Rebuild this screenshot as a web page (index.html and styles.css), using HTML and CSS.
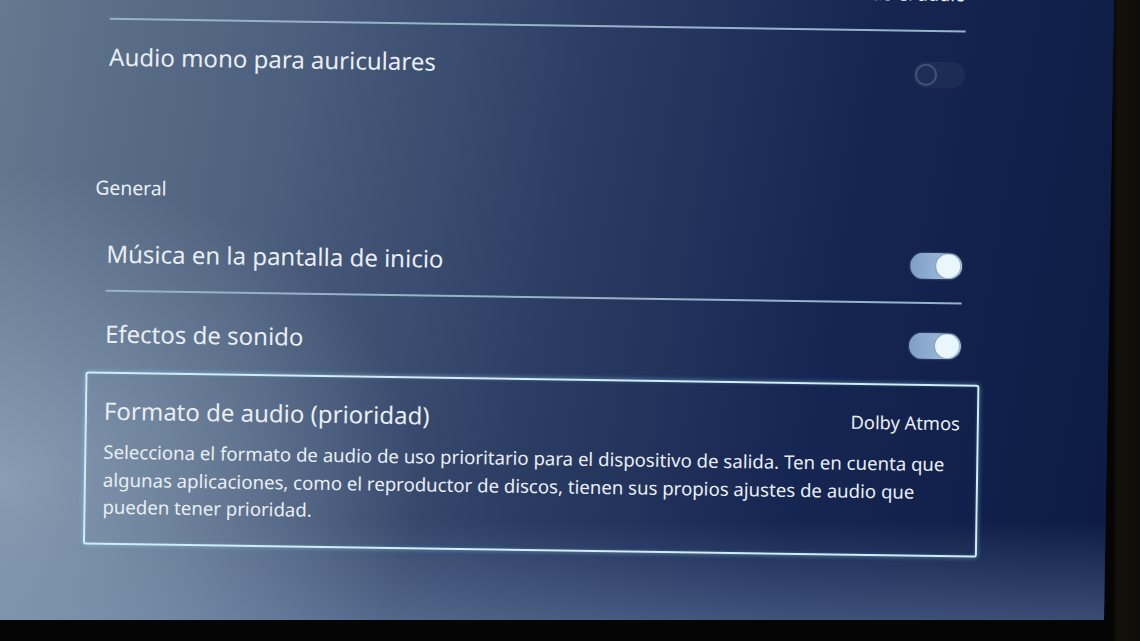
FILE: index.html
```html
<!DOCTYPE html>
<html lang="es">
<head>
    <meta charset="UTF-8">
    <meta name="viewport" content="width=device-width, initial-scale=1.0">
    <title>Ajustes - Sonido</title>
    <link rel="stylesheet" href="styles.css">
</head>
<body>
    <div class="screen">
        <div class="settings">
            <div class="row row-cut divided">
                <span class="label"></span>
                <span class="value">Todo el audio</span>
            </div>
            <div class="row row-mono">
                <span class="label">Audio mono para auriculares</span>
                <span class="toggle"></span>
            </div>

            <h2 class="group-title">General</h2>

            <div class="row row-music divided">
                <span class="label">Música en la pantalla de inicio</span>
                <span class="toggle on"></span>
            </div>
            <div class="row row-effects">
                <span class="label">Efectos de sonido</span>
                <span class="toggle on"></span>
            </div>
            <div class="row-focused">
                <div class="focused-head">
                    <span class="label">Formato de audio (prioridad)</span>
                    <span class="value">Dolby Atmos</span>
                </div>
                <p class="description">Selecciona el formato de audio de uso prioritario para el dispositivo de salida. Ten en cuenta que algunas aplicaciones, como el reproductor de discos, tienen sus propios ajustes de audio que pueden tener prioridad.</p>
            </div>
        </div>
    </div>
</body>
</html>
```

FILE: styles.css
```css
body {
    margin: 0;
    padding: 0;
    width: 1140px;
    height: 641px;
    overflow: hidden;
    background-color: #050505;
    background-image: linear-gradient(to right, transparent 1112px, #14110b 1118px, #0e0c08 100%);
    font-family: "Noto Sans", "Open Sans", sans-serif;
    color: #e8eef4;
}

.screen {
    height: 620px;
    overflow: hidden;
    clip-path: polygon(0 0, 1114px 0, 1104px 620px, 0 620px);
    background-color: #13224b;
    background-image:
        radial-gradient(ellipse 560px 420px at 0% 78%, rgba(165, 188, 208, 0.6), rgba(165, 188, 208, 0) 75%),
        linear-gradient(to top, rgba(125, 150, 185, 0.4), rgba(125, 150, 185, 0) 16%),
        linear-gradient(100deg, #64788f 0%, #4c5f7d 24%, #2c3d64 48%, #162652 70%, #0c1a42 100%);
}

.settings {
    width: 856px;
    margin: -25px 0 0 106px;
    transform: rotate(0.85deg);
    transform-origin: 424px 300px;
}

.row {
    display: flex;
    justify-content: space-between;
    align-items: center;
}

.divided {
    border-bottom: 2px solid #97b2cb;
}

.label {
    font-size: 24px;
    line-height: 30px;
}

.value {
    font-size: 18.3px;
    line-height: 26px;
}

.row-cut {
    padding-bottom: 23px;
}

.row-mono {
    padding: 18px 0 0;
}

.row-mono .toggle {
    margin-top: 12px;
}

.group-title {
    margin: 100px 0 16px -12px;
    font-size: 19.4px;
    font-weight: normal;
    line-height: 24px;
}

.row-music {
    padding: 23px 0 21px;
}

.row-effects {
    padding: 27px 0 23px;
}

.toggle {
    position: relative;
    width: 52px;
    height: 26px;
    border-radius: 13px;
    background-color: rgba(60, 80, 115, 0.22);
}

.toggle::after {
    content: "";
    position: absolute;
    top: 2px;
    left: 2px;
    width: 18px;
    height: 18px;
    border-radius: 50%;
    border: 2px solid rgba(110, 125, 155, 0.45);
}

.toggle.on {
    background-image: linear-gradient(to right, #7f9ec6, #a9c5e0);
    box-shadow: 0 0 2px rgba(180, 210, 235, 0.5);
}

.toggle.on::after {
    left: auto;
    right: 2px;
    top: 1px;
    width: 24px;
    height: 24px;
    border: none;
    background-color: #e9f7fd;
    box-shadow: 0 0 2px rgba(0, 0, 0, 0.3);
}

.row-focused {
    margin: 0 -19px;
    padding: 22px 17px 22px;
    border: 2px solid #cfeefa;
    border-radius: 3px;
    box-shadow: 0 0 5px rgba(150, 210, 240, 0.55), inset 0 0 3px rgba(150, 210, 240, 0.3);
}

.focused-head {
    display: flex;
    justify-content: space-between;
    align-items: center;
}

.description {
    margin: 12px 0 0;
    font-size: 18.6px;
    line-height: 27.5px;
}
```
